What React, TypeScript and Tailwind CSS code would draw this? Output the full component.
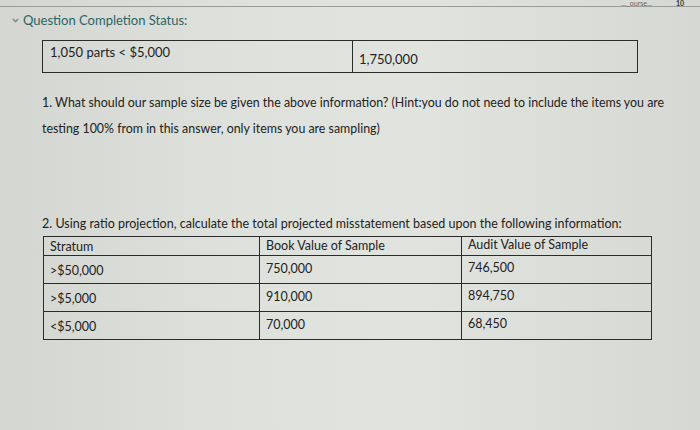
import { ChevronDown } from "lucide-react";

const rows = [
  { stratum: ">$50,000", book: "750,000", audit: "746,500" },
  { stratum: ">$5,000", book: "910,000", audit: "894,750" },
  { stratum: "<$5,000", book: "70,000", audit: "68,450" },
];

export default function App() {
  return (
    <div className="w-[700px] h-[430px] overflow-hidden bg-[linear-gradient(90deg,#d3d6d1_0%,#dfe1dd_35%,#e1e3df_60%,#d6d8d4_100%)] font-['Lato',sans-serif] text-[#222]">
      {/* top strip (mostly off the photo) */}
      <div className="h-[7px] border-b border-[#9a9c98] flex justify-end items-start pr-[16px] gap-[24px]">
        <span className="text-[7px] leading-[6px] text-[#666]">…_ourse...</span>
        <span className="text-[7px] leading-[6px] font-bold text-[#333]">10</span>
      </div>

      {/* status heading */}
      <div className="flex items-center gap-[3px] pl-[11px] pt-[5px] h-[22px]">
        <ChevronDown size={9} strokeWidth={4} className="text-[#8a8c88]" />
        <span className="text-[13px] text-[#2c6466]">Question Completion Status:</span>
      </div>

      {/* answer box */}
      <div className="ml-[42px] mt-[11px] w-[596px] h-[33px] flex border-[1.5px] border-[#2b2b2b]">
        <div className="w-[310px] border-r-[1.5px] border-[#2b2b2b] px-[7px] pt-[2px] text-[13px]">
          1,050 parts &lt; $5,000
        </div>
        <div className="flex-1 px-[6px] pt-[9px] text-[13px]">1,750,000</div>
      </div>

      {/* question 1 */}
      <p className="ml-[42px] mt-[17px] w-[630px] text-[12.4px] leading-[26px]">
        1. What should our sample size be given the above information? (Hint:you do not need to include the items you are
        testing 100% from in this answer, only items you are sampling)
      </p>

      {/* question 2 */}
      <p className="ml-[42px] mt-[74px] text-[12.5px] leading-[16px]">
        2. Using ratio projection, calculate the total projected misstatement based upon the following information:
      </p>

      <table className="ml-[43px] mt-[4px] w-[609px] border-collapse text-[12.5px]">
        <thead>
          <tr className="h-[19px]">
            <th className="w-[216px] border-[1.5px] border-[#2b2b2b] px-[6px] pt-[2px] text-left font-normal leading-[16px]">
              Stratum
            </th>
            <th className="w-[202px] border-[1.5px] border-[#2b2b2b] px-[6px] text-left font-normal leading-[16px]">
              Book Value of Sample
            </th>
            <th className="border-[1.5px] border-[#2b2b2b] px-[6px] pb-[2px] text-left font-normal leading-[16px]">
              Audit Value of Sample
            </th>
          </tr>
        </thead>
        <tbody>
          {rows.map((r) => (
            <tr key={r.stratum} className="h-[28px]">
              <td className="border-[1.5px] border-[#2b2b2b] px-[6px] pt-[4px]">{r.stratum}</td>
              <td className="border-[1.5px] border-[#2b2b2b] px-[6px]">{r.book}</td>
              <td className="border-[1.5px] border-[#2b2b2b] px-[6px] pb-[3px]">{r.audit}</td>
            </tr>
          ))}
        </tbody>
      </table>
    </div>
  );
}
